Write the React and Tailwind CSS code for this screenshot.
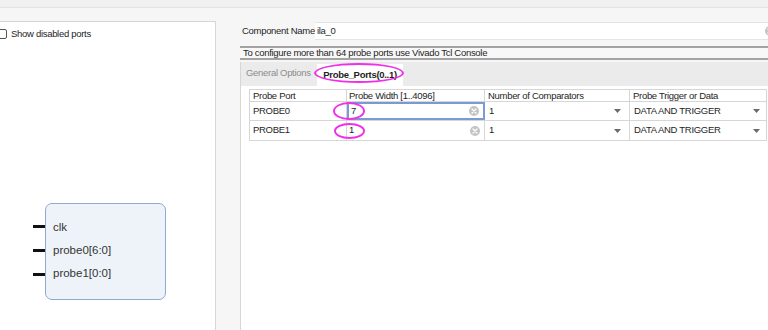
import React from 'react';

// small grey round "clear" button used in the text fields
const ClearIcon = ({ className = '' }) => (
  <svg className={className} width="10" height="10" viewBox="0 0 10 10">
    <circle cx="5" cy="5" r="5" fill="#c4c4c4" />
    <path d="M3 3l4 4M7 3l-4 4" stroke="#ffffff" strokeWidth="1.3" strokeLinecap="round" />
  </svg>
);

const Caret = () => (
  <svg width="7" height="4" viewBox="0 0 7 4" className="shrink-0">
    <path d="M0 0h7L3.5 4z" fill="#6b6b6b" />
  </svg>
);

const Ring = ({ className }) => (
  <div className={`absolute rounded-[50%] border-2 border-[#f030e8] pointer-events-none ${className}`} />
);

const rows = [
  { port: 'PROBE0', width: '7', focus: true },
  { port: 'PROBE1', width: '1', focus: false },
];

const pins = ['clk', 'probe0[6:0]', 'probe1[0:0]'];

export default function App() {
  return (
    <div
      className="relative w-[768px] h-[330px] overflow-hidden bg-[#f6f6f6] text-[9.5px] tracking-[-0.3px] text-[#1e1e1e] whitespace-nowrap"
      style={{ fontFamily: '"Liberation Sans", Arial, sans-serif' }}
    >
      {/* top strip */}
      <div className="h-[8px] bg-[#f1f1f1] border-b border-[#e3e3e3]" />

      <div className="flex h-[322px]">
        {/* left: symbol view */}
        <div className="w-[216px] shrink-0 pt-[13px] flex flex-col">
          <div className="flex-1 bg-white border-t border-r border-[#d6d6d6] flex flex-col">
            <div className="flex items-center gap-[4px] -ml-[3px] mt-[5px]">
              <span className="w-[10px] h-[10px] rounded-[2px] border border-[#555] bg-white" />
              <span>Show disabled ports</span>
            </div>

            <div className="flex mt-[162px] ml-[33px]">
              <div className="flex flex-col pt-[22px] gap-[21px]">
                {pins.map((p) => (
                  <div key={p} className="w-[12px] h-[3px] bg-[#111]" />
                ))}
              </div>
              <div className="w-[121px] h-[97px] rounded-[7px] border border-[#8fa8d4] bg-[#eef3fa] pl-[7px] pt-[17px] flex flex-col gap-[10px] text-[11.5px] tracking-normal text-[#333]">
                {pins.map((p) => (
                  <span key={p} className="leading-[13px]">{p}</span>
                ))}
              </div>
            </div>
          </div>
        </div>

        {/* right: configuration */}
        <div className="flex-1 pl-[24px] flex flex-col">
          <div className="flex items-center h-[18px] mt-[14px]">
            <span className="w-[75px] shrink-0 pl-[2px]">Component Name</span>
            <div className="flex-1 h-[18px] bg-white border-y border-[#e4e4e4] flex items-center pl-[2px]">
              <span>ila_0</span>
              <ClearIcon className="ml-auto -mr-[7px]" />
            </div>
          </div>

          <div className="mt-[6px] h-[14px] border-y-2 border-[#a3a3a3] bg-[#f8f8f8] flex items-center pl-[3px] leading-none">
            To configure more than 64 probe ports use Vivado Tcl Console
          </div>

          <div className="mt-[2px] h-[24px] bg-[#ebebeb] flex items-end border-l border-[#d6d6d6]">
            <span className="w-[76px] pl-[5px] pb-[6px] text-[#8c8c8c]">General Options</span>
            <span className="h-[22px] w-[86px] bg-white flex items-center justify-center font-bold">Probe_Ports(0..1)</span>
          </div>

          <div className="flex-1 bg-white border-l border-[#d6d6d6] pl-[8px] pt-[3px]">
            <div className="w-[518px] border border-[#d6d6d6]">
              <div className="flex h-[12px] items-center border-b border-[#d6d6d6]">
                <span className="w-[97px] pl-[3px] border-r border-[#d6d6d6] h-full leading-[12px]">Probe Port</span>
                <span className="w-[138px] pl-[2px] border-r border-[#d6d6d6] h-full leading-[12px]">Probe Width [1..4096]</span>
                <span className="w-[145px] pl-[3px] border-r border-[#d6d6d6] h-full leading-[12px]">Number of Comparators</span>
                <span className="flex-1 pl-[3px] h-full leading-[12px]">Probe Trigger or Data</span>
              </div>
              {rows.map((r, i) => (
                <div key={r.port} className={`flex h-[19px] items-center ${i === 0 ? 'border-b border-[#d6d6d6]' : ''}`}>
                  <span className="w-[97px] pl-[3px] border-r border-[#d6d6d6] h-full flex items-center">{r.port}</span>
                  <span
                    className={`w-[138px] pl-[2px] pr-[4px] h-full flex items-center ${
                      r.focus ? 'border-2 border-[#7a9ad2]' : 'border-r border-[#d6d6d6]'
                    }`}
                  >
                    {r.width}
                    <ClearIcon className="ml-auto" />
                  </span>
                  <span className="w-[145px] pl-[4px] pr-[8px] border-r border-[#d6d6d6] h-full flex items-center">
                    1
                    <span className="ml-auto"><Caret /></span>
                  </span>
                  <span className="flex-1 pl-[4px] pr-[6px] h-full flex items-center">
                    DATA AND TRIGGER
                    <span className="ml-auto"><Caret /></span>
                  </span>
                </div>
              ))}
            </div>
          </div>
        </div>
      </div>

      {/* annotation rings */}
      <Ring className="left-[314px] top-[63px] w-[90px] h-[20px]" />
      <Ring className="left-[333px] top-[102px] w-[32px] h-[18px]" />
      <Ring className="left-[334px] top-[123px] w-[31px] h-[16px]" />
    </div>
  );
}
